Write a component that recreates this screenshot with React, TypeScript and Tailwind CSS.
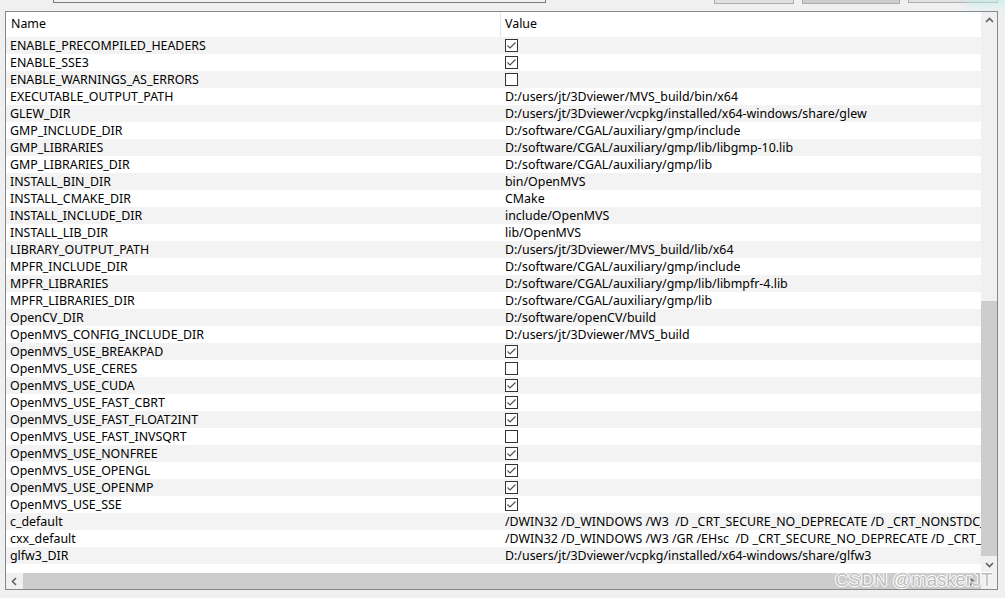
import React from 'react'

type Row = { name: string; value?: string; checked?: boolean }

const rows: Row[] = [
  { name: 'ENABLE_PRECOMPILED_HEADERS', checked: true },
  { name: 'ENABLE_SSE3', checked: true },
  { name: 'ENABLE_WARNINGS_AS_ERRORS', checked: false },
  { name: 'EXECUTABLE_OUTPUT_PATH', value: 'D:/users/jt/3Dviewer/MVS_build/bin/x64' },
  { name: 'GLEW_DIR', value: 'D:/users/jt/3Dviewer/vcpkg/installed/x64-windows/share/glew' },
  { name: 'GMP_INCLUDE_DIR', value: 'D:/software/CGAL/auxiliary/gmp/include' },
  { name: 'GMP_LIBRARIES', value: 'D:/software/CGAL/auxiliary/gmp/lib/libgmp-10.lib' },
  { name: 'GMP_LIBRARIES_DIR', value: 'D:/software/CGAL/auxiliary/gmp/lib' },
  { name: 'INSTALL_BIN_DIR', value: 'bin/OpenMVS' },
  { name: 'INSTALL_CMAKE_DIR', value: 'CMake' },
  { name: 'INSTALL_INCLUDE_DIR', value: 'include/OpenMVS' },
  { name: 'INSTALL_LIB_DIR', value: 'lib/OpenMVS' },
  { name: 'LIBRARY_OUTPUT_PATH', value: 'D:/users/jt/3Dviewer/MVS_build/lib/x64' },
  { name: 'MPFR_INCLUDE_DIR', value: 'D:/software/CGAL/auxiliary/gmp/include' },
  { name: 'MPFR_LIBRARIES', value: 'D:/software/CGAL/auxiliary/gmp/lib/libmpfr-4.lib' },
  { name: 'MPFR_LIBRARIES_DIR', value: 'D:/software/CGAL/auxiliary/gmp/lib' },
  { name: 'OpenCV_DIR', value: 'D:/software/openCV/build' },
  { name: 'OpenMVS_CONFIG_INCLUDE_DIR', value: 'D:/users/jt/3Dviewer/MVS_build' },
  { name: 'OpenMVS_USE_BREAKPAD', checked: true },
  { name: 'OpenMVS_USE_CERES', checked: false },
  { name: 'OpenMVS_USE_CUDA', checked: true },
  { name: 'OpenMVS_USE_FAST_CBRT', checked: true },
  { name: 'OpenMVS_USE_FAST_FLOAT2INT', checked: true },
  { name: 'OpenMVS_USE_FAST_INVSQRT', checked: false },
  { name: 'OpenMVS_USE_NONFREE', checked: true },
  { name: 'OpenMVS_USE_OPENGL', checked: true },
  { name: 'OpenMVS_USE_OPENMP', checked: true },
  { name: 'OpenMVS_USE_SSE', checked: true },
  {
    name: 'c_default',
    value: '/DWIN32 /D_WINDOWS /W3  /D _CRT_SECURE_NO_DEPRECATE /D _CRT_NONSTDC_NO_DEPRECATE',
  },
  {
    name: 'cxx_default',
    value: '/DWIN32 /D_WINDOWS /W3 /GR /EHsc  /D _CRT_SECURE_NO_DEPRECATE /D _CRT_NONSTDC_NO_DEPRECATE',
  },
  { name: 'glfw3_DIR', value: 'D:/users/jt/3Dviewer/vcpkg/installed/x64-windows/share/glfw3' },
]

function CheckBox({ checked }: { checked: boolean }) {
  return (
    <svg width="13" height="13" viewBox="0 0 13 13" className="block">
      <rect x="0.5" y="0.5" width="12" height="12" fill="#fff" stroke="#333" />
      {checked && (
        <polyline points="2.5,6.5 5,9 10.5,3.5" fill="none" stroke="#4a4a4a" strokeWidth="1.1" />
      )}
    </svg>
  )
}

function Chevron({ dir }: { dir: 'up' | 'down' | 'left' | 'right' }) {
  const pts = {
    up: '1,6 4.5,2.5 8,6',
    down: '1,3 4.5,6.5 8,3',
    left: '6,1 2.5,4.5 6,8',
    right: '3,1 6.5,4.5 3,8',
  }[dir]
  return (
    <svg width="9" height="9" viewBox="0 0 9 9" className="block">
      <polyline points={pts} fill="none" stroke="#606060" strokeWidth="1.6" />
    </svg>
  )
}

export default function App() {
  return (
    <div
      className="relative h-[598px] w-[1005px] overflow-hidden bg-[#f0f0f0] text-[12.4px] text-black"
      style={{ fontFamily: '"Noto Sans", "Noto Sans CJK SC", sans-serif' }}
    >
      {/* top strip: path box and buttons */}
      <div className="flex h-[11px] items-start">
        <div className="ml-[53px] h-[3px] w-[493px] border-x border-b border-[#7a7a7a] bg-[#f0f0f0]" />
        <div className="ml-[168px] h-[4px] w-[80px] border-x border-b border-[#adadad] bg-[#e1e1e1]" />
        <div className="ml-[8px] h-[4px] w-[98px] border-x border-b border-[#adadad] bg-[#cccccc]" />
        <div className="ml-[8px] h-[3px] w-[90px] border-x border-b border-[#adadad] bg-[#e1e1e1]" />
      </div>
      <div className="absolute right-[-10px] top-[-12px] h-[18px] w-[50px] rounded-full bg-[#bfeeea] opacity-60 blur-[4px]" />

      {/* cache table */}
      <div className="ml-[5px] flex h-[579px] w-[993px] flex-col border border-[#828790] bg-white">
        <div className="flex h-[561px]">
          <div className="flex w-[975px] flex-col overflow-hidden">
            <div className="flex h-[25px] shrink-0 items-center bg-white">
              <div className="flex h-full w-[495px] items-center border-r border-[#e5e5e5] pl-[5px]">
                Name
              </div>
              <div className="pl-[4px]">Value</div>
            </div>
            {rows.map((r, i) => (
              <div
                key={r.name}
                className={`flex h-[17px] shrink-0 items-center ${i % 2 === 0 ? 'bg-[#f3f3f3]' : 'bg-white'}`}
              >
                <div className="w-[496px] shrink-0 truncate pl-[4px] leading-[17px]">{r.name}</div>
                <div className="min-w-0 flex-1 overflow-hidden whitespace-pre pl-[3px] leading-[17px]">
                  {r.value !== undefined ? r.value : <CheckBox checked={!!r.checked} />}
                </div>
              </div>
            ))}
          </div>
          {/* vertical scrollbar */}
          <div className="flex w-[16px] flex-col bg-[#f0f0f0]">
            <div className="flex h-[17px] items-center justify-center">
              <Chevron dir="up" />
            </div>
            <div className="h-[272px]" />
            <div className="h-[255px] bg-[#cdcdcd]" />
            <div className="flex h-[17px] items-center justify-center">
              <Chevron dir="down" />
            </div>
          </div>
        </div>
        <div className="h-px flex-1" />
        {/* horizontal scrollbar */}
        <div className="flex h-[16px]">
          <div className="flex w-[17px] items-center justify-center bg-[#f0f0f0]">
            <Chevron dir="left" />
          </div>
          <div className="flex w-[958px] items-center justify-end bg-[#cdcdcd] pr-[5px]">
            <Chevron dir="right" />
          </div>
          <div className="w-[16px] bg-[#f0f0f0]" />
        </div>
      </div>

      {/* watermark */}
      <div
        className="absolute left-[835px] top-[569px] text-[18.5px] leading-[22px] text-[#bdbdbd]"
        style={{
          fontFamily: '"Liberation Sans", sans-serif',
          textShadow: '1px 0 0 #fff, -1px 0 0 #fff, 0 1px 0 #fff, 0 -1px 0 #fff',
        }}
      >
        CSDN @maskerJT
      </div>
    </div>
  )
}
